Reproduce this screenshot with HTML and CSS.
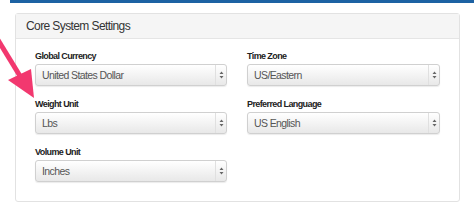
FILE: index.html
```html
<!DOCTYPE html>
<html lang="en">
<head>
  <meta charset="UTF-8">
  <title>Core System Settings</title>
  <link rel="stylesheet" href="styles.css">
</head>
<body>
<div class="top-bar"></div>

<div class="panel">
  <div class="panel-heading">Core System Settings</div>
  <div class="panel-body">
    <div class="form-grid">
      <div class="field">
        <label class="field-label">Global Currency</label>
        <div class="select-box">
          <span class="select-value">United States Dollar</span>
          <span class="select-caret">
            <svg width="5" height="8" viewBox="0 0 5 8"><path d="M2.5 0.5 L4.5 3 L0.5 3 Z M0.5 5 L4.5 5 L2.5 7.5 Z" fill="#666"/></svg>
          </span>
        </div>
      </div>
      <div class="field">
        <label class="field-label">Time Zone</label>
        <div class="select-box">
          <span class="select-value">US/Eastern</span>
          <span class="select-caret">
            <svg width="5" height="8" viewBox="0 0 5 8"><path d="M2.5 0.5 L4.5 3 L0.5 3 Z M0.5 5 L4.5 5 L2.5 7.5 Z" fill="#666"/></svg>
          </span>
        </div>
      </div>
      <div class="field">
        <label class="field-label">Weight Unit</label>
        <div class="select-box">
          <span class="select-value">Lbs</span>
          <span class="select-caret">
            <svg width="5" height="8" viewBox="0 0 5 8"><path d="M2.5 0.5 L4.5 3 L0.5 3 Z M0.5 5 L4.5 5 L2.5 7.5 Z" fill="#666"/></svg>
          </span>
        </div>
      </div>
      <div class="field">
        <label class="field-label">Preferred Language</label>
        <div class="select-box">
          <span class="select-value">US English</span>
          <span class="select-caret">
            <svg width="5" height="8" viewBox="0 0 5 8"><path d="M2.5 0.5 L4.5 3 L0.5 3 Z M0.5 5 L4.5 5 L2.5 7.5 Z" fill="#666"/></svg>
          </span>
        </div>
      </div>
      <div class="field">
        <label class="field-label">Volume Unit</label>
        <div class="select-box">
          <span class="select-value">Inches</span>
          <span class="select-caret">
            <svg width="5" height="8" viewBox="0 0 5 8"><path d="M2.5 0.5 L4.5 3 L0.5 3 Z M0.5 5 L4.5 5 L2.5 7.5 Z" fill="#666"/></svg>
          </span>
        </div>
      </div>
    </div>
  </div>
</div>

<!-- callout arrow pointing at Weight Unit -->
<svg class="callout-arrow" width="40" height="100" viewBox="0 0 40 100">
  <line x1="-2" y1="40" x2="20" y2="76" stroke="#f2386f" stroke-width="5"/>
  <polygon points="8,80 31,69 34,98" fill="#f2386f"/>
</svg>
</body>
</html>
```

FILE: styles.css
```css
body {
  margin: 0;
  background: #fff;
  font-family: "Liberation Sans", Arial, sans-serif;
  color: #333;
}

.top-bar {
  height: 3px;
  margin-left: 10px;
  background: #1d62a3;
}

.panel {
  margin: 10px 14px 0 15px;
  border: 1px solid #e2e2e2;
  border-radius: 3px;
}

.panel-heading {
  height: 24px;
  line-height: 24px;
  padding-left: 10px;
  font-size: 12px;
  letter-spacing: -0.6px;
  color: #333;
  background: #f5f5f5;
  border-bottom: 1px solid #e5e5e5;
}

.panel-body {
  padding: 11px 19px 19px 19px;
}

.form-grid {
  display: grid;
  grid-template-columns: 192px 193px;
  column-gap: 20px;
  row-gap: 12px;
}

.field-label {
  display: block;
  height: 12px;
  line-height: 12px;
  margin-bottom: 2px;
  font-size: 9px;
  font-weight: bold;
  letter-spacing: -0.6px;
  color: #222;
}

.select-box {
  display: flex;
  align-items: center;
  height: 20px;
  border: 1px solid #d0d0d0;
  border-radius: 3px;
  background: linear-gradient(#ffffff, #e8e8e8);
  box-shadow: 0 1px 1px rgba(0, 0, 0, 0.08);
}

.select-value {
  flex: 1;
  padding-left: 6px;
  font-size: 10.5px;
  letter-spacing: -0.6px;
  color: #555;
}

.select-caret {
  display: flex;
  align-items: center;
  justify-content: center;
  width: 10px;
  height: 100%;
  border-left: 1px solid #e0e0e0;
}

.callout-arrow {
  position: absolute;
  left: 0;
  top: 0;
}
```
